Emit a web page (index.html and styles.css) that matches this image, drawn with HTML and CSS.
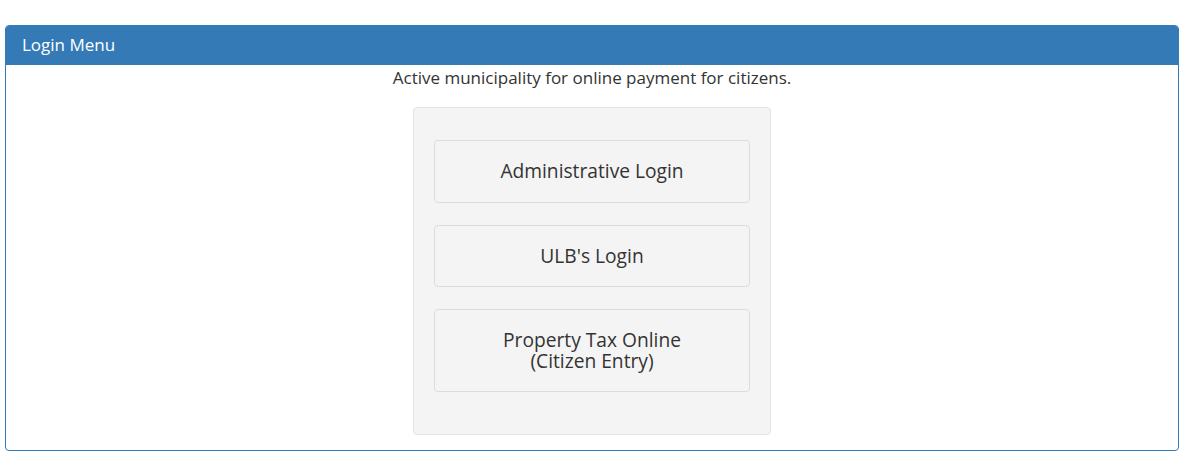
FILE: index.html
```html
<!DOCTYPE html>
<html>
<head>
<meta charset="utf-8">
<link rel="stylesheet" href="styles.css">
</head>
<body>
<div class="panel">
  <div class="panel-heading">Login Menu</div>
  <div class="panel-body">
    <p class="intro">Active municipality for online payment for citizens.</p>
    <div class="well">
      <a class="btn">Administrative Login</a>
      <a class="btn">ULB's Login</a>
      <a class="btn">Property Tax Online<br>(Citizen Entry)</a>
    </div>
  </div>
</div>
</body>
</html>
```
FILE: styles.css
```css
html, body {
  margin: 0;
  padding: 0;
  background: #fff;
}
body {
  font-family: "Open Sans", "Liberation Sans", sans-serif;
  color: #333;
  padding: 25px 21px 0 5px;
}
.panel {
  border: 1px solid #337ab7;
  border-radius: 4px;
  background: #fff;
}
.panel-heading {
  background: #337ab7;
  color: #fff;
  font-size: 17px;
  line-height: 20px;
  padding: 9px 16px 10px;
  border-radius: 3px 3px 0 0;
}
.panel-body {
  display: flex;
  flex-direction: column;
  align-items: center;
  padding: 0 0 15px;
}
.intro {
  margin: 2px 0 18px;
  font-size: 17px;
  line-height: 22px;
}
.well {
  width: 316px;
  background: #f4f4f4;
  border: 1px solid #e3e3e3;
  border-radius: 4px;
  padding: 32px 20px 42px;
  display: flex;
  flex-direction: column;
  gap: 22px;
}
.btn {
  display: block;
  background: #f4f4f4;
  border: 1px solid #dcdcdc;
  border-radius: 4px;
  padding: 20px 10px;
  font-size: 19.2px;
  line-height: 20.5px;
  text-align: center;
  color: #333;
}
```
